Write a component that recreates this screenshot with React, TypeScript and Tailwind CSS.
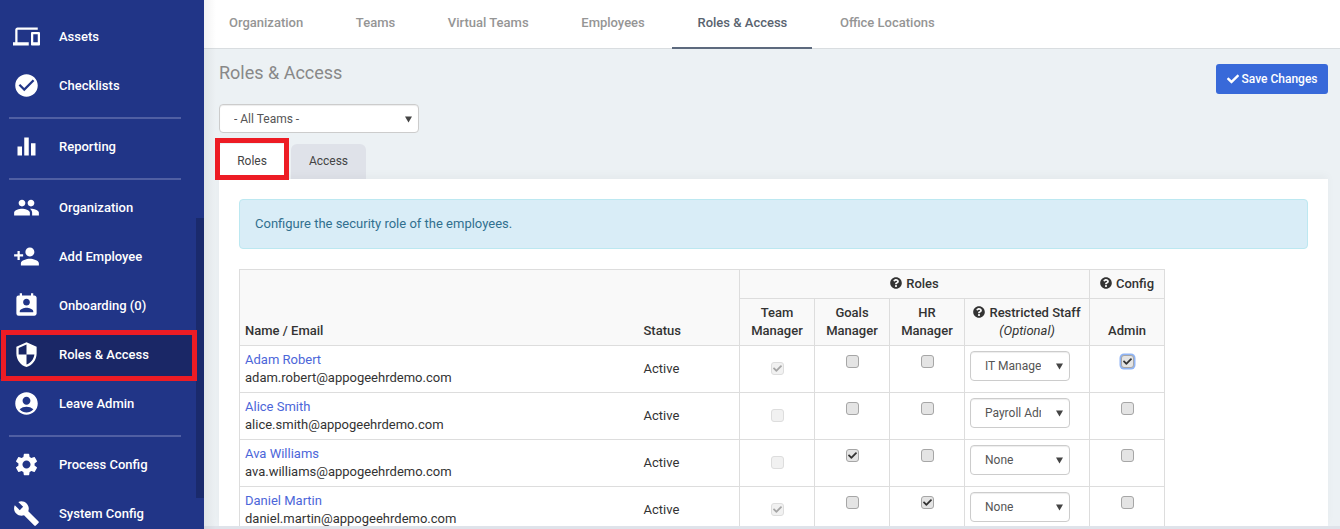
import { ReactNode } from "react";
import { FaCheck, FaQuestionCircle } from "react-icons/fa";
import {
  MdAccountCircle,
  MdBuild,
  MdCheckCircle,
  MdDevices,
  MdEqualizer,
  MdPeople,
  MdPermContactCalendar,
  MdPersonAdd,
  MdSecurity,
  MdSettings,
} from "react-icons/md";

const NavItem = ({ icon, label, active }: { icon: ReactNode; label: string; active?: boolean }) => (
  <div className={`relative flex h-[49px] items-center ${active ? "bg-[#1a2766]" : ""}`}>
    <div className="flex w-[59px] shrink-0 justify-center pr-[7px] text-white">{icon}</div>
    <span className="text-[13px] font-medium text-white">{label}</span>
    {active && (
      <div className="absolute left-[1px] top-0 z-10 h-[51px] w-[196px] border-[5px] border-[#ed1c24]" />
    )}
  </div>
);

const NavDivider = () => <div className="mx-[9px] mb-[3px] mt-[7px] h-[2px] w-[172px] bg-[#505fa3]" />;

const Sidebar = () => (
  <aside className="relative h-full w-[204px] shrink-0 overflow-hidden bg-[#213587] pt-3">
    <NavItem icon={<MdDevices size={27} />} label="Assets" />
    <NavItem icon={<MdCheckCircle size={27} />} label="Checklists" />
    <NavDivider />
    <NavItem icon={<MdEqualizer size={27} />} label="Reporting" />
    <NavDivider />
    <NavItem icon={<MdPeople size={27} />} label="Organization" />
    <NavItem icon={<MdPersonAdd size={27} />} label="Add Employee" />
    <NavItem icon={<MdPermContactCalendar size={27} />} label="Onboarding (0)" />
    <NavItem icon={<MdSecurity size={27} />} label="Roles & Access" active />
    <NavItem icon={<MdAccountCircle size={27} />} label="Leave Admin" />
    <NavDivider />
    <NavItem icon={<MdSettings size={27} />} label="Process Config" />
    <NavItem icon={<MdBuild size={27} />} label="System Config" />
    <div className="absolute right-0 top-[218px] h-[280px] w-[8px] bg-[#1a2a6c]" />
  </aside>
);

const topTabs = ["Organization", "Teams", "Virtual Teams", "Employees", "Roles & Access", "Office Locations"];

const TopTabs = () => (
  <nav className="flex h-[49px] shrink-0 gap-[2.7px] border-b border-[#d9dde0] bg-white">
    {topTabs.map((tab) => (
      <div
        key={tab}
        className={`flex h-[49px] items-center border-b-2 px-[25px] pb-[1px] text-[13px] font-medium ${
          tab === "Roles & Access"
            ? "border-[#5d6a7e] text-[#59636f]"
            : "border-transparent text-[#959595]"
        }`}
      >
        {tab}
      </div>
    ))}
  </nav>
);

const Caret = () => (
  <svg className="pointer-events-none absolute right-[7.5px] top-1/2 -mt-[3px]" width="7" height="7" viewBox="0 0 7 7">
    <path d="M0 0.5h7L3.5 6.5z" fill="#444" />
  </svg>
);

const Select = ({ value, className }: { value: string; className: string }) => (
  <div className={`relative ${className}`}>
    <select
      defaultValue={value}
      className="h-full w-full appearance-none rounded-[4px] border border-[#ccc] bg-white pl-[14px] pr-[28px] text-[12px] text-[#555] shadow-[inset_0_1px_1px_rgba(0,0,0,0.075)] outline-none"
    >
      <option>{value}</option>
    </select>
    <Caret />
  </div>
);

const Checkbox = ({ checked, disabled, focus }: { checked?: boolean; disabled?: boolean; focus?: boolean }) => (
  <span
    className={`inline-flex h-[13px] w-[13px] items-center justify-center rounded-[3px] border align-middle ${
      disabled
        ? "border-[#ddd] bg-[#f1f1f1] text-[#a5a5a5]"
        : "border-[#a6a6a6] bg-[#e4e4e4] text-[#333]"
    } ${focus ? "shadow-[0_0_0_1.5px_#8fb4f5]" : ""}`}
  >
    {checked && <FaCheck size={9} />}
  </span>
);

const th = "border border-[#ddd] px-[5px] py-[5px] text-[13px] font-medium leading-[18px] text-[#333] text-center";
const td = "border border-[#ddd] px-[5px] text-center";

const employees = [
  { name: "Adam Robert", email: "adam.robert@appogeehrdemo.com", team: true, goals: false, hr: false, staff: "IT Manager", admin: true },
  { name: "Alice Smith", email: "alice.smith@appogeehrdemo.com", team: false, goals: false, hr: false, staff: "Payroll Admin", admin: false },
  { name: "Ava Williams", email: "ava.williams@appogeehrdemo.com", team: false, goals: true, hr: false, staff: "None", admin: false },
  { name: "Daniel Martin", email: "daniel.martin@appogeehrdemo.com", team: true, goals: false, hr: true, staff: "None", admin: false },
];

const QuestionIcon = () => <FaQuestionCircle size={12} className="mr-[4px] inline align-[-1px]" />;

const RolesTable = () => (
  <table className="w-[925px] table-fixed border-collapse">
    <colgroup>
      <col className="w-[399px]" />
      <col className="w-[101px]" />
      <col className="w-[75px]" />
      <col className="w-[75px]" />
      <col className="w-[75px]" />
      <col className="w-[125px]" />
      <col className="w-[75px]" />
    </colgroup>
    <thead>
      <tr className="h-[29px] bg-[#f9f9f9]">
        <th rowSpan={2} className={`${th} !border-r-0 align-bottom !text-left`}>Name / Email</th>
        <th rowSpan={2} className={`${th} !border-l-0 align-bottom !text-left`}>Status</th>
        <th colSpan={4} className={th}>
          <QuestionIcon />
          Roles
        </th>
        <th className={`${th} !px-0`}>
          <QuestionIcon />
          Config
        </th>
      </tr>
      <tr className="h-[47px] bg-[#f9f9f9]">
        <th className={`${th} !pt-[4px] align-bottom`}>Team<br />Manager</th>
        <th className={`${th} !pt-[4px] align-bottom`}>Goals<br />Manager</th>
        <th className={`${th} !pt-[4px] align-bottom`}>HR<br />Manager</th>
        <th className={`${th} !px-0 !pt-[4px] align-bottom`}>
          <QuestionIcon />
          Restricted Staff<br />
          <em className="font-normal">(Optional)</em>
        </th>
        <th className={`${th} !pt-[4px] align-bottom`}>Admin</th>
      </tr>
    </thead>
    <tbody>
      {employees.map((e) => (
        <tr key={e.name} className="h-[47px]">
          <td className="border border-[#ddd] border-r-0 px-[5px] text-[13px] leading-[18px] text-[#333]">
            <div className="text-[#4c66d9]">{e.name}</div>
            <div>{e.email}</div>
          </td>
          <td className="border border-[#ddd] border-l-0 px-[5px] text-[13px] text-[#333]">Active</td>
          <td className={`${td} pb-[2px]`}>
            <Checkbox checked={e.team} disabled />
          </td>
          <td className={`${td} pb-[16px]`}>
            <Checkbox checked={e.goals} />
          </td>
          <td className={`${td} pb-[16px]`}>
            <Checkbox checked={e.hr} />
          </td>
          <td className={`${td} pb-[6px]`}>
            <Select value={e.staff} className="h-[30px] w-[100px]" />
          </td>
          <td className={`${td} pb-[16px]`}>
            <Checkbox checked={e.admin} focus={e.admin} />
          </td>
        </tr>
      ))}
    </tbody>
  </table>
);

const Main = () => (
  <main className="relative flex h-full min-w-0 flex-1 flex-col overflow-hidden bg-[#ecf1f4]">
    <TopTabs />
    <div className="flex min-h-0 flex-1 flex-col pb-[3px] pl-[15px] pr-[12px]">
      <div className="flex justify-between">
        <h1 className="pt-[13px] text-[18px] leading-[22px] text-[#888]">Roles &amp; Access</h1>
        <button className="mt-[15px] flex h-[30px] w-[112px] items-center justify-center gap-[3px] rounded-[3px] bg-[#3869d9] text-[12px] font-medium text-white">
          <FaCheck size={12} />
          Save Changes
        </button>
      </div>
      <Select value="- All Teams -" className="mt-[10px] h-[29px] w-[200px]" />
      <div className="mt-[11px] flex h-[35px] shrink-0 items-end gap-[4px]">
        <div className="relative flex h-[35px] w-[68px] items-center justify-center rounded-t-[4px] bg-white pb-[2px] pr-[2px] text-[12px] text-[#444]">
          Roles
          <div className="absolute -left-[4px] -top-[6px] h-[42px] w-[74px] border-[5px] border-[#ed1c24]" />
        </div>
        <div className="flex h-[35px] w-[75px] items-center justify-center rounded-t-[6px] bg-[#dfe2e9] pb-[2px] text-[12px] text-[#444]">
          Access
        </div>
      </div>
      <section className="min-h-0 flex-1 overflow-hidden bg-white px-[20px] pt-[20px] shadow-[0_-4px_8px_rgba(0,0,0,0.03)]">
        <div className="flex h-[50px] items-center rounded-[4px] border border-[#bce8f1] bg-[#d9edf7] pl-[15px] text-[13px] text-[#31708f]">
          Configure the security role of the employees.
        </div>
        <div className="mt-[20px]">
          <RolesTable />
        </div>
      </section>
    </div>
    <div className="absolute inset-x-0 bottom-0 h-[3px] bg-[#dfe3ea]" />
    <div className="pointer-events-none absolute inset-y-0 left-0 w-[12px] bg-gradient-to-r from-black/[0.05] to-transparent" />
  </main>
);

export default function App() {
  return (
    <div className="flex h-[529px] w-[1340px] overflow-hidden font-['Roboto',sans-serif]">
      <Sidebar />
      <Main />
    </div>
  );
}
